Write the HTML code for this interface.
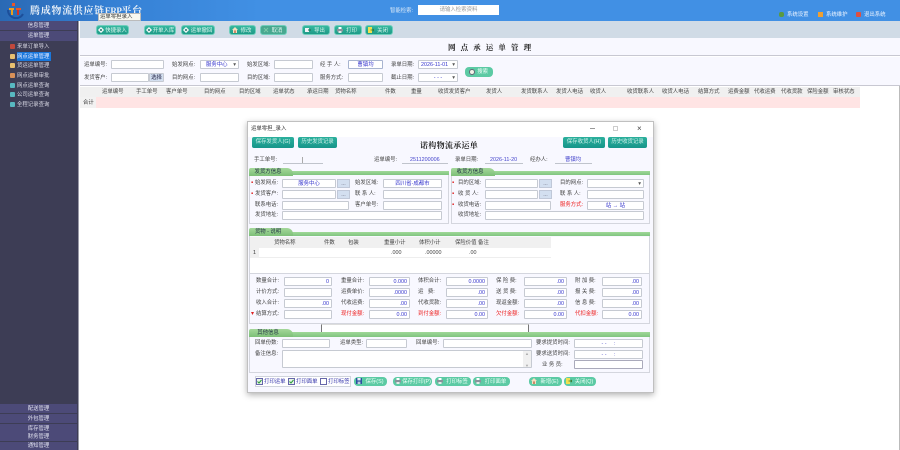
<!DOCTYPE html>
<html lang="zh"><head><meta charset="utf-8"><title>腾成物流供应链ERP平台</title>
<style>
html,body{margin:0;padding:0;width:900px;height:450px;overflow:hidden;background:#fff}
body{position:relative;font:5.4px/9px "Liberation Sans","Noto Sans CJK SC",sans-serif;color:#333;filter:blur(.3px)}
div,span{position:absolute;box-sizing:border-box;white-space:nowrap}
svg{position:absolute}
.l{height:9px;line-height:9px;color:#444;margin-top:1px}
.r{color:#e22}
.s{color:#d22;font-size:6px;margin-top:1px}
.i{height:9px;line-height:8px;background:#fff;border:1px solid #c6cad2;border-radius:1px;padding:0 2px;color:#33c;text-align:right}
.c{text-align:center}
.g{border-color:#aab;color:#666}
.d{height:9px;line-height:8px;background:#d3dff0;border:1px solid #c0c8d8;text-align:center;color:#667;width:13px}
.b{height:10px;line-height:11px;border-radius:3px;background:linear-gradient(#35b8a0,#1f9a88);border:1px solid #6fcfbc;color:#dff5ee;text-align:center;padding-left:7px}
.b2{height:9px;line-height:10px;border-radius:4px;background:#5ccaa4;color:#eefff8;text-align:center;padding-left:8px}
.b3{height:11px;line-height:11px;border-radius:2px;background:linear-gradient(#2bb09c,#16958a);color:#cff0ea;text-align:center}
.h{height:10px;line-height:11px;background:#4c4a78;color:#dfe0ee;left:0;width:77px;text-align:center}
.m{left:17px;height:9px;line-height:11px;color:#d8d8e4}
.mi{left:10px;width:5px;height:5px;border-radius:1px}
.th{top:87px;height:10px;line-height:11px;color:#444}
.tab{height:8px;line-height:9px;width:44px;background:linear-gradient(#a4d89a,#7dbf78);border-radius:2px 6px 0 0;color:#234;text-align:center;padding-right:6px}
.bar{height:4px;background:linear-gradient(#a0d898,#80c480)}
.box{background:#f8f8ff;border:1px solid #d4d6de;border-top:0}
</style></head><body>

<svg width="0" height="0" style="left:0;top:0">
<symbol id="dia" viewBox="0 0 6 6"><path d="M3 0 6 3 3 6 0 3Z" fill="#fff"/><path d="M3 1.6 4.4 3 3 4.4 1.6 3Z" fill="#2a7a70"/></symbol>
<symbol id="house" viewBox="0 0 6 6"><path d="M3 0 6 3H5V6H1V3H0Z" fill="#f4e0c0"/><path d="M2.4 3.4H3.6V6H2.4Z" fill="#b05030"/></symbol>
<symbol id="xx" viewBox="0 0 6 6"><path d="M1 1 5 5M5 1 1 5" stroke="#7ac8a8" stroke-width="1"/></symbol>
<symbol id="exp" viewBox="0 0 6 6"><path d="M0 1H4V5H0Z" fill="#f0f4f8"/><path d="M3 3H6" stroke="#264" stroke-width="1"/></symbol>
<symbol id="prt" viewBox="0 0 6 6"><path d="M1.5 0H4.5V2H1.5Z" fill="#fff"/><path d="M0 2H6V4.5H0Z" fill="#8a929c"/><path d="M1.5 4H4.5V6H1.5Z" fill="#e8e8e8"/></symbol>
<symbol id="door" viewBox="0 0 6 6"><path d="M0 0H4V6H0Z" fill="#f0e050"/><path d="M2.5 3H6M4.8 1.8 6 3 4.8 4.2" stroke="#3a7a30" stroke-width=".8" fill="none"/></symbol>
<symbol id="save" viewBox="0 0 6 6"><path d="M0 0H6V6H0Z" fill="#2a4f9f"/><path d="M1.4 0H4.6V2.4H1.4Z" fill="#e8eef8"/><path d="M1.6 3.6H4.4V6H1.6Z" fill="#c0cce0"/></symbol>
</svg>

<!-- header -->
<div style="left:0;top:0;width:900px;height:21px;background:linear-gradient(90deg,#2a69b4 0,#3580d4 110px,#4190e4 260px,#4190e4 100%)"></div>
<svg style="left:6px;top:1px" width="19" height="18" viewBox="0 0 19 18"><path d="M2 9a8 8 0 0 0 15 4" fill="none" stroke="#1d4f9a" stroke-width="2"/><rect x="6" y="2" width="3" height="3" fill="#e8562a"/><rect x="3" y="7" width="5" height="2" fill="#f0a020"/><rect x="10" y="7" width="5" height="2" fill="#e8562a"/><rect x="5" y="9" width="2" height="5" fill="#e8a020"/><rect x="11" y="9" width="2" height="5" fill="#d83020"/></svg>
<div style="left:30px;top:4px;height:14px;font:bold 10px/14px 'Liberation Serif','Noto Serif CJK SC',serif;color:#e8f0f8;letter-spacing:.7px">腾成物流供应链<span style="position:static;font-size:9px;letter-spacing:-.5px">ERP</span>平台</div>
<div style="left:98px;top:13px;width:43px;height:8px;line-height:7px;background:#f8f8f0;border:1px solid #bbb;color:#333;padding-left:1px;overflow:hidden">运单零担录入</div>
<span class="l" style="left:390px;top:6px;color:#d8e8f8">智能检索:</span>
<div style="left:418px;top:5px;width:81px;height:10px;line-height:11px;background:#fff;color:#999;text-align:center">请输入检索资料</div>
<div style="left:779px;top:12px;width:5px;height:5px;background:#5a9a40;border-radius:2px"></div><span class="l" style="left:787px;top:10px;color:#e8f2ff">系统设置</span>
<div style="left:818px;top:12px;width:5px;height:5px;background:#f0a030"></div><span class="l" style="left:826px;top:10px;color:#e8f2ff">系统维护</span>
<div style="left:856px;top:12px;width:5px;height:5px;background:#e05040;border-radius:1px"></div><span class="l" style="left:864px;top:10px;color:#e8f2ff">退出系统</span>

<!-- sidebar -->
<div style="left:0;top:21px;width:79px;height:429px;background:#3d3d55;border-right:1px solid #9a9aa8"></div>
<div class="h" style="top:21px;height:9px">信息管理</div>
<div class="h" style="top:31px">运单管理</div>
<div class="mi" style="top:44px;background:#c0483c"></div><span class="m" style="top:42px">来单订单导入</span>
<div class="mi" style="top:54px;background:#e8c070"></div><div style="left:17px;top:52px;width:34px;height:9px;background:#1a78dc"></div><span class="m" style="top:52px;color:#eef">网点运单管理</span>
<div class="mi" style="top:63px;background:#e8c070"></div><span class="m" style="top:61px">货运运单管理</span>
<div class="mi" style="top:73px;background:#d89058"></div><span class="m" style="top:71px">网点运单审批</span>
<div class="mi" style="top:83px;background:#58b8c0"></div><span class="m" style="top:81px">网点运单查询</span>
<div class="mi" style="top:92px;background:#58b8c0"></div><span class="m" style="top:90px">公司运单查询</span>
<div class="mi" style="top:102px;background:#58b8c0"></div><span class="m" style="top:100px">全程记录查询</span>
<div class="h" style="top:404px;height:9px">配送管理</div>
<div class="h" style="top:414px;height:9px">外包管理</div>
<div class="h" style="top:424px;height:9px">库存管理</div>
<div class="h" style="top:433px;height:8px;line-height:9px">财务管理</div>
<div class="h" style="top:442px;height:8px;line-height:9px">通知管理</div>

<!-- toolbar -->
<div style="left:80px;top:21px;width:820px;height:17px;background:#d0dbe6"></div>
<div class="b" style="left:96px;top:25px;width:33px">快捷录入<svg style="left:1px;top:1px" width="6" height="6"><use href="#dia"/></svg></div>
<div class="b" style="left:144px;top:25px;width:32px">开单入库<svg style="left:1px;top:1px" width="6" height="6"><use href="#dia"/></svg></div>
<div class="b" style="left:181px;top:25px;width:34px">运单撤回<svg style="left:1px;top:1px" width="6" height="6"><use href="#dia"/></svg></div>
<div class="b" style="left:229px;top:25px;width:27px">修改<svg style="left:2px;top:1px" width="6" height="6"><use href="#house"/></svg></div>
<div class="b" style="left:260px;top:25px;width:27px;background:#48a890">取消<svg style="left:2px;top:1px" width="6" height="6"><use href="#xx"/></svg></div>
<div class="b" style="left:302px;top:25px;width:28px">导出<svg style="left:2px;top:1px" width="6" height="6"><use href="#exp"/></svg></div>
<div class="b" style="left:334px;top:25px;width:28px">打印<svg style="left:2px;top:1px" width="6" height="6"><use href="#prt"/></svg></div>
<div class="b" style="left:365px;top:25px;width:28px">关闭<svg style="left:2px;top:1px" width="6" height="6"><use href="#door"/></svg></div>

<div style="left:80px;top:38px;width:820px;height:18px;background:#f8f8ff;border-bottom:1px solid #c8c8d2"></div>
<div style="left:448px;top:42px;height:12px;font:bold 7.5px/12px 'Liberation Serif','Noto Serif CJK SC',serif;color:#222;letter-spacing:5.1px">网点承运单管理</div>

<!-- search -->
<div style="left:80px;top:57px;width:820px;height:29px;background:#f8f8ff;border-bottom:1px solid #c8c8d2"></div>
<span class="l" style="left:84px;top:60px">运单编号:</span><div class="i" style="left:111px;top:60px;width:53px"></div>
<span class="l" style="left:172px;top:60px">始发网点:</span><div class="i c" style="left:200px;top:60px;width:39px;text-align:left;padding-left:5px">服务中心<span style="right:2px;top:0;color:#555">▾</span></div>
<span class="l" style="left:247px;top:60px">始发区域:</span><div class="i" style="left:274px;top:60px;width:39px"></div>
<span class="l" style="left:320px;top:60px">经 手 人:</span><div class="i c" style="left:348px;top:60px;width:35px;text-align:center;border-color:#a8b4d0">曹镇均</div>
<span class="l" style="left:391px;top:60px">录单日期:</span><div class="i" style="left:418px;top:60px;width:40px;text-align:left">2026-11-01<span style="right:2px;top:0;color:#555">▾</span></div>
<span class="l" style="left:84px;top:73px">发货客户:</span><div class="i" style="left:111px;top:73px;width:38px"></div><div class="i" style="left:149px;top:73px;width:15px;background:#d3dff0;color:#224;text-align:center;padding:0">选择</div>
<span class="l" style="left:172px;top:73px">目的网点:</span><div class="i" style="left:200px;top:73px;width:39px"></div>
<span class="l" style="left:247px;top:73px">目的区域:</span><div class="i" style="left:274px;top:73px;width:39px"></div>
<span class="l" style="left:320px;top:73px">服务方式:</span><div class="i" style="left:348px;top:73px;width:35px"></div>
<span class="l" style="left:391px;top:73px">截止日期:</span><div class="i" style="left:418px;top:73px;width:40px;text-align:center">- - -<span style="right:2px;top:0;color:#555">▾</span></div>
<div style="left:465px;top:67px;width:28px;height:10px;line-height:11px;border-radius:4px;background:#5ccaa4;color:#eefff8;text-align:right;padding-right:5px">搜索<div style="left:4px;top:2px;width:6px;height:6px;border-radius:50%;background:#f4f4e8;border:1px solid #667"></div></div>

<!-- table -->
<div style="left:80px;top:87px;width:780px;height:10px;background:#f0f0f0"></div>
<div style="left:80px;top:97px;width:780px;height:11px;background:#ffe4e4"></div>
<div style="left:80px;top:97px;width:16px;height:11px;background:#f2f2f2;line-height:12px;padding-left:3px">合计</div>
<div style="left:899px;top:86px;width:1px;height:364px;background:#bbb"></div>
<span class="th" style="left:102px">运单编号</span><span class="th" style="left:136px">手工单号</span><span class="th" style="left:166px">客户单号</span><span class="th" style="left:204px">目的网点</span><span class="th" style="left:239px">目的区域</span><span class="th" style="left:273px">运单状态</span><span class="th" style="left:307px">承运日期</span><span class="th" style="left:335px">货物名称</span><span class="th" style="left:385px">件数</span><span class="th" style="left:411px">重量</span><span class="th" style="left:438px">收货发货客户</span><span class="th" style="left:486px">发货人</span><span class="th" style="left:521px">发货联系人</span><span class="th" style="left:556px">发货人电话</span><span class="th" style="left:590px">收货人</span><span class="th" style="left:627px">收货联系人</span><span class="th" style="left:662px">收货人电话</span><span class="th" style="left:698px">结算方式</span><span class="th" style="left:728px">运费金额</span><span class="th" style="left:754px">代收运费</span><span class="th" style="left:781px">代收货款</span><span class="th" style="left:807px">保险金额</span><span class="th" style="left:833px">审核状态</span>

<!-- dialog -->
<div style="left:247px;top:121px;width:407px;height:272px;background:#f8f8ff;border:1px solid #c0c0c0;box-shadow:0 2px 6px rgba(0,0,0,.3)"></div>
<div style="left:248px;top:122px;width:405px;height:15px;background:#fff"></div>
<span class="l" style="left:251px;top:124px;color:#333">运单零担_录入</span>
<div style="left:590px;top:128px;width:5px;height:1px;background:#999"></div>
<div style="left:613px;top:126px;width:5px;height:5px;border:1px solid #ccc"></div>
<span style="left:637px;top:124px;font-size:8px;color:#444">×</span>

<div class="b3" style="left:252px;top:137px;width:42px">保存发货人(G)</div>
<div class="b3" style="left:298px;top:137px;width:39px">历史发货记录</div>
<div style="left:420px;top:139px;height:13px;font:bold 8px/13px 'Liberation Serif','Noto Serif CJK SC',serif;color:#222;letter-spacing:.3px">诺构物流承运单</div>
<div class="b3" style="left:563px;top:137px;width:42px">保存收货人(H)</div>
<div class="b3" style="left:608px;top:137px;width:39px">历史收货记录</div>

<span class="l" style="left:254px;top:155px">手工单号:</span>
<div style="left:283px;top:163px;width:40px;height:1px;background:#c0c4cc"></div><div style="left:302px;top:157px;width:1px;height:6px;background:#aaa"></div>
<span class="l" style="left:374px;top:155px">运单编号:</span><span class="l" style="left:410px;top:155px;color:#44c">2511200006</span><div style="left:402px;top:163px;width:46px;height:1px;background:#c0c4cc"></div>
<span class="l" style="left:455px;top:155px">录单日期:</span><span class="l" style="left:490px;top:155px;color:#44c">2026-11-20</span><div style="left:485px;top:163px;width:38px;height:1px;background:#c0c4cc"></div>
<span class="l" style="left:530px;top:155px">经办人:</span><span class="l" style="left:565px;top:155px;color:#44c">曹镇均</span><div style="left:555px;top:163px;width:37px;height:1px;background:#c0c4cc"></div>

<!-- sender -->
<div class="box" style="left:249px;top:175px;width:200px;height:49px"></div>
<div class="bar" style="left:249px;top:171px;width:200px"></div><div class="tab" style="left:249px;top:168px">发货方信息</div>
<span class="s" style="left:251px;top:178px">▪</span><span class="l" style="left:255px;top:178px">始发网点:</span><div class="i c" style="left:282px;top:179px;width:54px;text-align:center">服务中心</div><div class="d" style="left:337px;top:179px">...</div>
<span class="l" style="left:355px;top:178px">始发区域:</span><div class="i c" style="left:383px;top:179px;width:59px;text-align:center">四川省-成都市</div>
<span class="s" style="left:251px;top:189px">▪</span><span class="l" style="left:255px;top:189px">发货客户:</span><div class="i" style="left:282px;top:190px;width:54px"></div><div class="d" style="left:337px;top:190px">...</div>
<span class="l" style="left:355px;top:189px">联 系 人:</span><div class="i" style="left:383px;top:190px;width:59px"></div>
<span class="l" style="left:255px;top:200px">联系电话:</span><div class="i" style="left:282px;top:201px;width:67px"></div>
<span class="l" style="left:355px;top:200px">客户单号:</span><div class="i" style="left:383px;top:201px;width:59px"></div>
<span class="l" style="left:255px;top:210px">发货地址:</span><div class="i" style="left:282px;top:211px;width:160px"></div>

<!-- receiver -->
<div class="box" style="left:451px;top:175px;width:199px;height:49px"></div>
<div class="bar" style="left:451px;top:171px;width:199px"></div><div class="tab" style="left:451px;top:168px">收货方信息</div>
<span class="s" style="left:452px;top:178px">▪</span><span class="l" style="left:458px;top:178px">目的区域:</span><div class="i" style="left:485px;top:179px;width:53px"></div><div class="d" style="left:539px;top:179px">...</div>
<span class="l" style="left:560px;top:178px">目的网点:</span><div class="i" style="left:587px;top:179px;width:57px"><span style="right:2px;top:0;color:#555">▾</span></div>
<span class="s" style="left:452px;top:189px">▪</span><span class="l" style="left:458px;top:189px">收 货 人:</span><div class="i" style="left:485px;top:190px;width:53px"></div><div class="d" style="left:539px;top:190px">...</div>
<span class="l" style="left:560px;top:189px">联 系 人:</span><div class="i" style="left:587px;top:190px;width:57px"></div>
<span class="s" style="left:452px;top:200px">▪</span><span class="l" style="left:458px;top:200px">收货电话:</span><div class="i" style="left:485px;top:201px;width:66px"></div>
<span class="l r" style="left:560px;top:200px">服务方式:</span><div class="i c" style="left:587px;top:201px;width:57px;text-align:center">站 → 站</div>
<span class="l" style="left:458px;top:210px">收货地址:</span><div class="i" style="left:485px;top:211px;width:159px"></div>

<!-- goods -->
<div class="box" style="left:249px;top:236px;width:401px;height:88px"></div>
<div class="bar" style="left:249px;top:232px;width:401px"></div><div class="tab" style="left:249px;top:228px">货物 - 说明</div>
<div style="left:250px;top:237px;width:301px;height:11px;background:#f0f0f0"></div>
<div style="left:250px;top:248px;width:301px;height:10px;background:#fff;border-bottom:1px solid #eee"></div>
<div style="left:250px;top:248px;width:9px;height:10px;background:#f0f0f0;text-align:center;line-height:11px">1</div>
<div style="left:250px;top:258px;width:399px;height:16px;background:#fff;border-bottom:1px solid #d4d6de"></div>
<div style="left:551px;top:237px;width:98px;height:21px;background:#fff"></div>
<span class="l" style="left:274px;top:238px">货物名称</span><span class="l" style="left:324px;top:238px">件数</span><span class="l" style="left:348px;top:238px">包装</span><span class="l" style="left:384px;top:238px">重量小计</span><span class="l" style="left:419px;top:238px">体积小计</span><span class="l" style="left:455px;top:238px">保险价值 备注</span>
<span class="l" style="left:391px;top:248px">.000</span><span class="l" style="left:425px;top:248px">.00000</span><span class="l" style="left:469px;top:248px">.00</span>

<span class="l" style="left:256px;top:276px">数量合计:</span><div class="i" style="left:284px;top:277px;width:48px">0</div>
<span class="l" style="left:341px;top:276px">重量合计:</span><div class="i" style="left:369px;top:277px;width:41px">0.000</div>
<span class="l" style="left:418px;top:276px">体积合计:</span><div class="i" style="left:446px;top:277px;width:42px">0.0000</div>
<span class="l" style="left:496px;top:276px">保 险 费:</span><div class="i" style="left:524px;top:277px;width:43px">.00</div>
<span class="l" style="left:575px;top:276px">附 加 费:</span><div class="i" style="left:602px;top:277px;width:40px">.00</div>

<span class="l" style="left:256px;top:287px">计价方式:</span><div class="i" style="left:284px;top:288px;width:48px"></div>
<span class="l" style="left:341px;top:287px">运费单价:</span><div class="i" style="left:369px;top:288px;width:41px">.0000</div>
<span class="l" style="left:418px;top:287px">运&nbsp;&nbsp;&nbsp;费:</span><div class="i" style="left:446px;top:288px;width:42px">.00</div>
<span class="l" style="left:496px;top:287px">送 货 费:</span><div class="i" style="left:524px;top:288px;width:43px">.00</div>
<span class="l" style="left:575px;top:287px">报 关 费:</span><div class="i" style="left:602px;top:288px;width:40px">.00</div>

<span class="l" style="left:256px;top:298px">收入合计:</span><div class="i" style="left:284px;top:299px;width:48px">.00</div>
<span class="l" style="left:341px;top:298px">代收运费:</span><div class="i" style="left:369px;top:299px;width:41px">.00</div>
<span class="l" style="left:418px;top:298px">代收货款:</span><div class="i" style="left:446px;top:299px;width:42px">.00</div>
<span class="l" style="left:496px;top:298px">现返金额:</span><div class="i" style="left:524px;top:299px;width:43px">.00</div>
<span class="l" style="left:575px;top:298px">信 息 费:</span><div class="i" style="left:602px;top:299px;width:40px">.00</div>

<span class="s" style="left:251px;top:309px">▾</span><span class="l" style="left:256px;top:309px">结算方式:</span><div class="i" style="left:284px;top:310px;width:48px"></div>
<span class="l r" style="left:341px;top:309px">现付金额:</span><div class="i" style="left:369px;top:310px;width:41px">0.00</div>
<span class="l r" style="left:418px;top:309px">到付金额:</span><div class="i" style="left:446px;top:310px;width:42px">0.00</div>
<span class="l r" style="left:496px;top:309px">欠付金额:</span><div class="i" style="left:524px;top:310px;width:43px">0.00</div>
<span class="l r" style="left:575px;top:309px">代扣金额:</span><div class="i" style="left:602px;top:310px;width:40px">0.00</div>

<div style="left:321px;top:324px;width:208px;height:9px;background:#fff;border:1px solid #777;border-top-color:#ddd;border-bottom:0"></div>

<!-- other -->
<div class="box" style="left:249px;top:337px;width:401px;height:36px"></div>
<div class="bar" style="left:249px;top:332px;width:401px;height:5px"></div><div class="tab" style="left:249px;top:329px">其他信息</div>
<span class="l" style="left:255px;top:338px">回单份数:</span><div class="i" style="left:282px;top:339px;width:48px"></div>
<span class="l" style="left:340px;top:338px">运单类型:</span><div class="i" style="left:366px;top:339px;width:41px"></div>
<span class="l" style="left:416px;top:338px">回单编号:</span><div class="i" style="left:443px;top:339px;width:89px"></div>
<span class="l" style="left:536px;top:338px">要求提货时间:</span><div class="i c" style="left:574px;top:339px;width:69px;text-align:center;color:#55c">- - &nbsp;&nbsp;&nbsp;&nbsp;:</div>
<span class="l" style="left:255px;top:349px">备注信息:</span><div class="i" style="left:282px;top:350px;width:250px;height:18px"></div>
<div style="left:523px;top:351px;width:8px;height:16px;background:#f0f0f0;color:#aaa;text-align:center;line-height:6px;font-size:4px;white-space:normal">▲<br><br>▼</div>
<span class="l" style="left:536px;top:349px">要求送货时间:</span><div class="i c" style="left:574px;top:350px;width:69px;text-align:center;color:#55c">- - &nbsp;&nbsp;&nbsp;&nbsp;:</div>
<span class="l" style="left:542px;top:360px">业 务 员:</span><div class="i g" style="left:574px;top:360px;width:69px"></div>

<!-- footer -->
<div style="left:255px;top:376px;width:96px;height:11px;background:#fff;border:1px solid #d0d4dc"></div>
<svg style="left:256px;top:378px" width="7" height="7"><rect x=".5" y=".5" width="6" height="6" fill="#e8f4e8" stroke="#66a"/><path d="M1.5 3.5 3 5 5.5 2" stroke="#2a9a3a" fill="none"/></svg><span class="l" style="left:264px;top:377px;color:#33a">打印运单</span>
<svg style="left:288px;top:378px" width="7" height="7"><rect x=".5" y=".5" width="6" height="6" fill="#e8f4e8" stroke="#66a"/><path d="M1.5 3.5 3 5 5.5 2" stroke="#2a9a3a" fill="none"/></svg><span class="l" style="left:296px;top:377px;color:#33a">打印面单</span>
<svg style="left:320px;top:378px" width="7" height="7"><rect x=".5" y=".5" width="6" height="6" fill="#fff" stroke="#66a"/></svg><span class="l" style="left:328px;top:377px;color:#33a">打印标签</span>
<div class="b2" style="left:354px;top:377px;width:33px">保存(S)<svg style="left:2px;top:1px" width="6" height="6"><use href="#save"/></svg></div>
<div class="b2" style="left:393px;top:377px;width:39px">保存打印(P)<svg style="left:2px;top:1px" width="6" height="6"><use href="#prt"/></svg></div>
<div class="b2" style="left:435px;top:377px;width:36px">打印标签<svg style="left:2px;top:1px" width="6" height="6"><use href="#prt"/></svg></div>
<div class="b2" style="left:473px;top:377px;width:37px">打印面单<svg style="left:2px;top:1px" width="6" height="6"><use href="#prt"/></svg></div>
<div class="b2" style="left:529px;top:377px;width:33px">新增(E)<svg style="left:2px;top:1px" width="6" height="6"><use href="#house"/></svg></div>
<div class="b2" style="left:564px;top:377px;width:32px">关闭(Q)<svg style="left:2px;top:1px" width="6" height="6"><use href="#door"/></svg></div>
</body></html>
